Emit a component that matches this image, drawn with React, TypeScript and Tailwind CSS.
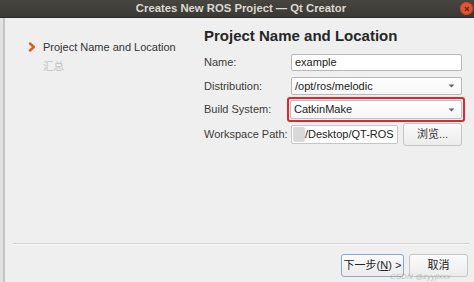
import React from "react";

const FONT = { fontFamily: '"Liberation Sans", "Noto Sans CJK SC", sans-serif' };

function Chevron() {
  return (
    <svg width="8" height="10" viewBox="0 0 8 10" className="shrink-0">
      <path d="M2 1.5 L5.8 5 L2 8.5" fill="none" stroke="#dd5a26" strokeWidth="2.4" strokeLinecap="round" strokeLinejoin="round" />
    </svg>
  );
}

function Caret() {
  return (
    <svg width="7" height="4" viewBox="0 0 7 4" className="shrink-0">
      <path d="M0.5 0.5 L6.5 0.5 L3.5 3.5 Z" fill="#666" />
    </svg>
  );
}

function FormRow({ label, h, children }: { label: string; h: string; children: React.ReactNode }) {
  return (
    <div className={`flex items-center ${h}`}>
      <span className="w-[87px] shrink-0 text-[11px] text-[#3b3b3b]">{label}</span>
      <div className="flex-1 min-w-0">{children}</div>
    </div>
  );
}

export default function App() {
  return (
    <div className="w-[474px] h-[282px] flex flex-col bg-[#efefef] overflow-hidden relative" style={FONT}>
      {/* Title bar */}
      <div className="h-[18px] shrink-0 grid grid-cols-[1fr_auto_1fr] items-center bg-gradient-to-b from-[#46453f] to-[#3a3935] border-b border-[#2b2a27]">
        <div />
        <span className="pl-[8px] text-[11.3px] font-bold text-[#dcd9d2] leading-none">
          Creates New ROS Project — Qt Creator
        </span>
        <div className="flex justify-end pr-[1px]">
          <div className="w-[13px] h-[13px] rounded-full bg-[#e4572e] flex items-center justify-center shadow-[inset_0_0_0_1px_#c8431d]">
            <svg width="6" height="6" viewBox="0 0 6 6">
              <path d="M1 1 L5 5 M5 1 L1 5" stroke="#6b2413" strokeWidth="1.3" />
            </svg>
          </div>
        </div>
      </div>

      <div className="flex-1 flex min-h-0">
        {/* left window edge */}
        <div className="w-[3px] bg-[#e2e2e2]" />
        <div className="w-[2px] bg-[#c4c4c4]" />

        <div className="flex-1 flex flex-col min-w-0">
          <div className="flex-1 flex">
            {/* Sidebar */}
            <div className="w-[199px] shrink-0 pl-[23px] pt-[23px] flex flex-col">
              <div className="flex items-center gap-[7px] h-[12px]">
                <Chevron />
                <span className="text-[11px] text-[#333] leading-none">Project Name and Location</span>
              </div>
              <span className="pl-[15px] mt-[8px] text-[10.5px] text-[#c2c2c2] leading-none">汇总</span>
            </div>

            {/* Main */}
            <div className="flex-1 pt-[9px] pr-[12px] flex flex-col">
              <h1 className="text-[15px] font-bold text-[#262626] leading-[18px]">Project Name and Location</h1>
              <div className="mt-[6px] flex flex-col">
                <FormRow label="Name:" h="h-[23px]">
                  <div className="h-[17px] bg-white border border-[#b8b8b8] rounded-[2px] flex items-center px-[3px] text-[11px] text-[#222]">
                    example
                  </div>
                </FormRow>
                <FormRow label="Distribution:" h="h-[24px]">
                  <div className="h-[18px] bg-gradient-to-b from-white to-[#f6f6f6] border border-[#b8b8b8] rounded-[2px] flex items-center justify-between pl-[3px] pr-[6px] text-[11px] text-[#222]">
                    <span>/opt/ros/melodic</span>
                    <Caret />
                  </div>
                </FormRow>
                <FormRow label="Build System:" h="h-[23px]">
                  <div className="-ml-[4px] -mr-[3px] border-2 border-[#e3262a] rounded-[3px] p-[1px]">
                    <div className="h-[19px] bg-gradient-to-b from-white to-[#f6f6f6] border border-[#c0c0c0] rounded-[2px] flex items-center justify-between pl-[3px] pr-[6px] text-[11px] text-[#222]">
                      <span>CatkinMake</span>
                      <Caret />
                    </div>
                  </div>
                </FormRow>
                <FormRow label="Workspace Path:" h="h-[27px]">
                  <div className="flex items-center gap-[5px]">
                    <div className="flex-1 min-w-0 h-[19px] bg-white border border-[#c6c6c6] rounded-[2px] flex items-center pl-[1px] overflow-hidden">
                      <div className="w-[12px] h-[15px] bg-[#d9d9d9] rounded-[2px] shrink-0" />
                      <span className="text-[11px] text-[#222] whitespace-nowrap">/Desktop/QT-ROS</span>
                    </div>
                    <button className="w-[59px] h-[23px] shrink-0 bg-gradient-to-b from-[#fafafa] to-[#ececec] border border-[#c4c4c4] rounded-[3px] text-[11px] text-[#333]">
                      浏览...
                    </button>
                  </div>
                </FormRow>
              </div>
            </div>
          </div>

          {/* Footer */}
          <div className="ml-[8px] mr-[4px] h-[1px] bg-[#d2d2d2] border-b border-[#f9f9f9] box-content" />
          <div className="h-[37px] shrink-0 flex items-start justify-end gap-[5px] pr-[6px] pt-[9px]">
            <button className="w-[63px] h-[23px] bg-gradient-to-b from-[#fbfbfb] to-[#ececec] border border-[#86a9cc] rounded-[3px] text-[11px] text-[#222] leading-none">
              下一步(<span className="underline">N</span>) &gt;
            </button>
            <button className="w-[59px] h-[23px] bg-gradient-to-b from-[#fbfbfb] to-[#ececec] border border-[#c6c6c6] rounded-[3px] text-[11px] text-[#222] leading-none">
              取消
            </button>
          </div>
        </div>
      </div>

      {/* watermark */}
      <span className="absolute left-[390px] top-[273px] text-[8px] italic text-[#9a9a9a]/60 leading-none pointer-events-none">
        CSDN @zyyjlxxx
      </span>
    </div>
  );
}
